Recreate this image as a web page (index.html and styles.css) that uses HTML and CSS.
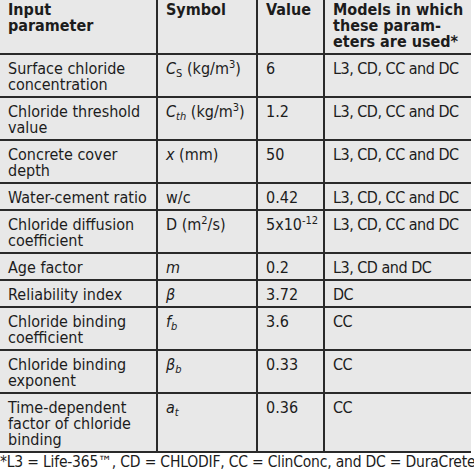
FILE: index.html
```html
<!DOCTYPE html>
<html>
<head>
<meta charset="utf-8">
<link rel="stylesheet" href="styles.css">
</head>
<body>
<table class="tbl">
  <colgroup>
    <col class="c1"><col class="c2"><col class="c3"><col class="c4">
  </colgroup>
  <thead>
    <tr>
      <th>Input<br>parameter</th>
      <th>Symbol</th>
      <th>Value</th>
      <th>Models in which<br>these param-<br>eters are used*</th>
    </tr>
  </thead>
  <tbody>
    <tr><td>Surface chloride<br>concentration</td><td><i>C</i><sub>S</sub> (kg/m<sup>3</sup>)</td><td>6</td><td class="m">L3, CD, CC and DC</td></tr>
    <tr><td>Chloride threshold<br>value</td><td><i>C</i><sub><i>th</i></sub> (kg/m<sup>3</sup>)</td><td>1.2</td><td class="m">L3, CD, CC and DC</td></tr>
    <tr><td>Concrete cover<br>depth</td><td><i>x</i> (mm)</td><td>50</td><td class="m">L3, CD, CC and DC</td></tr>
    <tr><td>Water-cement ratio</td><td>w/c</td><td>0.42</td><td class="m">L3, CD, CC and DC</td></tr>
    <tr><td>Chloride diffusion<br>coefficient</td><td>D (m<sup>2</sup>/s)</td><td>5x10<sup>-12</sup></td><td class="m">L3, CD, CC and DC</td></tr>
    <tr><td>Age factor</td><td><i>m</i></td><td>0.2</td><td class="m">L3, CD and DC</td></tr>
    <tr><td>Reliability index</td><td><i>β</i></td><td>3.72</td><td class="m">DC</td></tr>
    <tr><td>Chloride binding<br>coefficient</td><td><i>f</i><sub><i>b</i></sub></td><td>3.6</td><td class="m">CC</td></tr>
    <tr><td>Chloride binding<br>exponent</td><td><i>β</i><sub><i>b</i></sub></td><td>0.33</td><td class="m">CC</td></tr>
    <tr><td>Time-dependent<br>factor of chloride<br>binding</td><td><i>a</i><sub><i>t</i></sub></td><td>0.36</td><td class="m">CC</td></tr>
  </tbody>
</table>
<p class="note">*L3 = Life-365™, CD = CHLODIF, CC = ClinConc, and DC = DuraCrete</p>
</body>
</html>
```
FILE: styles.css
```css
html, body {
  margin: 0;
  padding: 0;
  background: #ffffff;
}
body {
  font-family: "DejaVu Sans Condensed", "DejaVu Sans", sans-serif;
  font-size: 16px;
  line-height: 16px;
  color: #1c1c1c;
  width: 474px;
  overflow: hidden;
}
.tbl {
  border-collapse: collapse;
  table-layout: fixed;
  width: 471px;
  background: #e8e8e8;
}
.c1 { width: 157px; }
.c2 { width: 100px; }
.c3 { width: 67px; }
.c4 { width: 147px; }
.tbl th,
.tbl td {
  text-align: left;
  vertical-align: top;
  padding: 6px 8px 3px 8px;
  border: 2px solid #2a2a2a;
  white-space: nowrap;
}
.tbl th {
  font-weight: bold;
  padding-top: 2px;
  padding-bottom: 3px;
  border-top: 0;
}
.tbl tr > :first-child { border-left: 0; }
.tbl tr > :last-child { border-right: 0; }
.tbl td.m {
  letter-spacing: -0.5px;
}
sub, sup {
  font-size: 11px;
  line-height: 0;
}
sub { vertical-align: -3px; }
sup { vertical-align: 6px; }
.note {
  margin: 1px 0 0 0;
  font-size: 15.5px;
  letter-spacing: -0.2px;
  white-space: nowrap;
}
```
